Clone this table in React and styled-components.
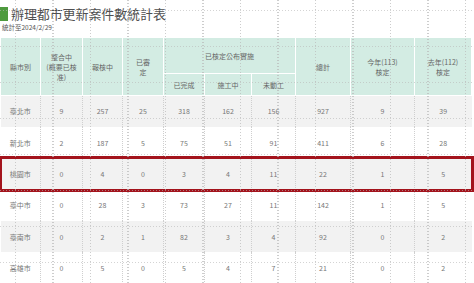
import React from 'react';
import styled, {createGlobalStyle} from 'styled-components';

const GlobalStyle = createGlobalStyle`
  html, body {
    margin: 0;
    padding: 0;
    background: #fff;
  }
  body {
    font-family: "Noto Sans CJK TC", "Noto Sans", sans-serif;
    color: #666;
  }
`;

const Page = styled.div`
  position: relative;
  width: 474px;
  height: 283px;
  overflow: hidden;

  &::before,
  &::after {
    content: '';
    position: absolute;
    inset: 0;
    pointer-events: none;
  }

  /* dotted guide grid laid over the page */
  &::before {
    background-image: repeating-linear-gradient(to right, #b9b9b9 0 1px, transparent 1px 37.5px);
    background-position: 15px 0;
    -webkit-mask-image: repeating-linear-gradient(to bottom, #000 0 1px, transparent 1px 3px);
    mask-image: repeating-linear-gradient(to bottom, #000 0 1px, transparent 1px 3px);
    opacity: 0.7;
  }

  &::after {
    background-image: repeating-linear-gradient(to bottom, #b9b9b9 0 1px, transparent 1px 36px);
    background-position: 0 10px;
    -webkit-mask-image: repeating-linear-gradient(to right, #000 0 1px, transparent 1px 3px);
    mask-image: repeating-linear-gradient(to right, #000 0 1px, transparent 1px 3px);
    opacity: 0.6;
  }
`;

const TitleRow = styled.h1`
  display: flex;
  align-items: center;
  gap: 3px;
  margin: 0;
  padding-top: 5px;
  height: 17px;
  font-size: 13px;
  font-weight: 400;
  color: #4f4f4f;
  letter-spacing: -0.1px;
`;

const TitleMark = styled.span`
  width: 8px;
  height: 14px;
  background: #4e9a3e;
`;

const Updated = styled.div`
  padding: 1px 0 0 2px;
  height: 14px;
  font-size: 6.5px;
  line-height: 9px;
  color: #555;
`;

const Table = styled.table`
  width: 471px;
  table-layout: fixed;
  border-collapse: collapse;
  font-size: 7px;
  color: #777;
  text-align: center;
`;

const Th = styled.th`
  background: #d3ece3;
  border: 1px solid #fff;
  font-weight: 400;
  color: #666;
  line-height: 10px;
  padding: 0 2px;
  height: ${p => p.$h || 21}px;
`;

const Tr = styled.tr`
  height: 31.4px;
  background: ${p => (p.$odd ? '#f2f2f2' : '#fff')};
  outline: ${p => (p.$mark ? '3px solid #a3131c' : 'none')};
  outline-offset: -1px;
`;

const Td = styled.td`
  border-right: 1px dotted #cfcfcf;
  padding: 0;
  &:last-child {
    border-right: none;
  }
`;

const widths = [40, 42, 40, 41, 41, 47, 44, 55, 64, 57];

const rows = [
  ['臺北市', 9, 257, 25, 318, 162, 156, 927, 9, 39],
  ['新北市', 2, 187, 5, 75, 51, 91, 411, 6, 28],
  ['桃園市', 0, 4, 0, 3, 4, 11, 22, 1, 5],
  ['臺中市', 0, 28, 3, 73, 27, 11, 142, 1, 5],
  ['臺南市', 0, 2, 1, 82, 3, 4, 92, 0, 2],
  ['高雄市', 0, 5, 0, 5, 4, 7, 21, 0, 2],
];

const App = () => (
  <Page>
    <GlobalStyle />
    <TitleRow>
      <TitleMark />
      辦理都市更新案件數統計表
    </TitleRow>
    <Updated>統計至2024/2/29</Updated>
    <Table>
      <colgroup>
        {widths.map((w, i) => <col key={i} style={{width: w}} />)}
      </colgroup>
      <thead>
        <tr>
          <Th rowSpan={2} $h={35}>縣市別</Th>
          <Th rowSpan={2} $h={35}>整合中<br />(概要已核<br />准)</Th>
          <Th rowSpan={2} $h={35}>報核中</Th>
          <Th rowSpan={2} $h={35}>已審<br />定</Th>
          <Th colSpan={3} $h={35}>已核定公布實施</Th>
          <Th rowSpan={2} $h={35}>總計</Th>
          <Th rowSpan={2} $h={35}>今年(113)<br />核定</Th>
          <Th rowSpan={2} $h={35}>去年(112)<br />核定</Th>
        </tr>
        <tr>
          <Th>已完成</Th>
          <Th>施工中</Th>
          <Th>未動工</Th>
        </tr>
      </thead>
      <tbody>
        {rows.map((row, i) => (
          <Tr key={row[0]} $odd={i % 2 === 0} $mark={row[0] === '桃園市'}>
            {row.map((cell, j) => <Td key={j}>{cell}</Td>)}
          </Tr>
        ))}
      </tbody>
    </Table>
  </Page>
);

export default App;
